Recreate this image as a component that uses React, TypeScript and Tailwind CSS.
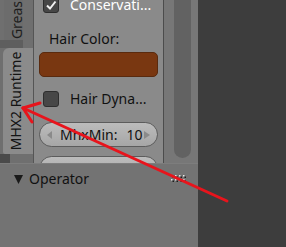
import React from "react";

const font = { fontFamily: '"Noto Sans", "Open Sans", sans-serif' };

function Checkbox({ checked }: { checked?: boolean }) {
  return (
    <div className="w-[16px] h-[16px] rounded-[3px] bg-[#474747] border border-[#2e2e2e] flex items-center justify-center shrink-0">
      {checked && (
        <svg width="12" height="12" viewBox="0 0 12 12">
          <path d="M2 6.5 L5 9.5 L10.5 2.5" fill="none" stroke="#f2f2f2" strokeWidth="2" />
        </svg>
      )}
    </div>
  );
}

function Grip() {
  const dots = [];
  for (let i = 0; i < 4; i++) {
    for (let j = 0; j < 2; j++) {
      dots.push(<rect key={`w${i}${j}`} x={i * 4} y={j * 4} width="1.5" height="1.5" fill="#e6e6e6" />);
      dots.push(<rect key={`b${i}${j}`} x={i * 4 + 1.5} y={j * 4 + 1.5} width="1.5" height="1.5" fill="#1e1e1e" />);
    }
  }
  return (
    <svg width="16" height="8" viewBox="0 0 16 8">
      {dots}
    </svg>
  );
}

export default function App() {
  return (
    <div className="relative w-[286px] h-[247px] flex overflow-hidden bg-[#3d3d3d]" style={font}>
      <div className="w-[198px] flex flex-col">
        {/* upper region */}
        <div className="h-[163px] shrink-0 flex overflow-hidden">
          {/* tab strip */}
          <div className="w-[34px] shrink-0 bg-[#6f6f6f] flex flex-col border-r border-[#555555]">
            <div className="h-[40px] shrink-0 ml-[4px] mr-[10px] bg-[#6c6c6c] flex items-center justify-center overflow-hidden">
              <span className="-rotate-90 text-[14px] text-[#1e1e1e] whitespace-nowrap leading-none ml-[8px]">Greas</span>
            </div>
            <div className="h-[8px] shrink-0 bg-[#5e5e5e] mr-[10px]" />
            <div className="h-[106px] shrink-0 ml-[3px] bg-[#8b8b8b] rounded-tl-[6px] rounded-bl-[2px] flex items-center justify-center overflow-hidden">
              <span className="-rotate-90 text-[14px] text-[#141414] whitespace-nowrap leading-none ml-[-4px]">
                MHX2 Runtime
              </span>
            </div>
            <div className="flex-1 flex">
              <div className="w-[10px] bg-[#4a4a4a]" />
            </div>
          </div>
          {/* panel */}
          <div className="w-[130px] shrink-0 bg-[#8a8a8a] flex flex-col px-[5px] border-r border-[#4c4c4c]">
            <div className="flex items-center shrink-0 h-[16px] mt-[-3px] pl-[4px] gap-[11px]">
              <Checkbox checked />
              <span className="text-[14px] text-white whitespace-nowrap leading-none">Conservati...</span>
            </div>
            <div className="mt-[19px] shrink-0 pl-[10px] text-[14px] text-[#111] leading-none h-[14px]">Hair Color:</div>
            <div className="mt-[6px] shrink-0 h-[25px] rounded-[5px] bg-[#793711] border border-[#5a2a0e]" />
            <div className="flex items-center shrink-0 h-[16px] mt-[14px] pl-[4px] gap-[11px]">
              <Checkbox />
              <span className="text-[14px] text-[#111] whitespace-nowrap leading-none">Hair Dyna...</span>
            </div>
            <div className="mt-[15px] shrink-0 h-[25px] rounded-full border border-[#5c5c5c] bg-gradient-to-b from-[#bcbcbc] to-[#a6a6a6] flex items-center px-[7px] text-[14px] text-[#111] leading-none">
              <svg width="6" height="8" viewBox="0 0 6 8">
                <path d="M5 0 L0 4 L5 8 Z" fill="#8a8a8a" />
              </svg>
              <span className="ml-[7px]">MhxMin:</span>
              <span className="ml-[9px]">10</span>
              <span className="flex-1" />
              <svg width="6" height="8" viewBox="0 0 6 8">
                <path d="M0 0 L6 4 L0 8 Z" fill="#8a8a8a" />
              </svg>
            </div>
            <div className="mt-[9px] shrink-0 h-[25px] rounded-full border border-[#5c5c5c] bg-gradient-to-b from-[#bcbcbc] to-[#a6a6a6]" />
          </div>
          {/* scroll area */}
          <div className="flex-1 bg-[#777777] flex pl-[10px] pr-[5px]">
            <div className="w-[17px] h-[158px] bg-[#626262] rounded-b-full" />
          </div>
        </div>
        {/* operator panel */}
        <div className="flex-1 bg-[#737373] border-t border-[#7d7d7d]">
          <div className="flex items-center h-[30px] pl-[14px] pr-[11px] text-[14px] text-[#111] leading-none">
            <svg width="9" height="9" viewBox="0 0 9 9">
              <path d="M0 0 L9 0 L4.5 9 Z" fill="#1a1a1a" />
            </svg>
            <span className="ml-[6px]">Operator</span>
            <span className="flex-1" />
            <Grip />
          </div>
        </div>
      </div>
      <div className="flex-1" />
      {/* red annotation arrow */}
      <svg className="absolute left-0 top-0 pointer-events-none" width="286" height="247">
        <g stroke="#e8141c" strokeWidth="3" strokeLinecap="round" fill="none">
          <line x1="227" y1="201" x2="23" y2="108" />
          <line x1="23" y1="108" x2="40" y2="103" />
          <line x1="23" y1="108" x2="32" y2="122" />
        </g>
      </svg>
    </div>
  );
}
